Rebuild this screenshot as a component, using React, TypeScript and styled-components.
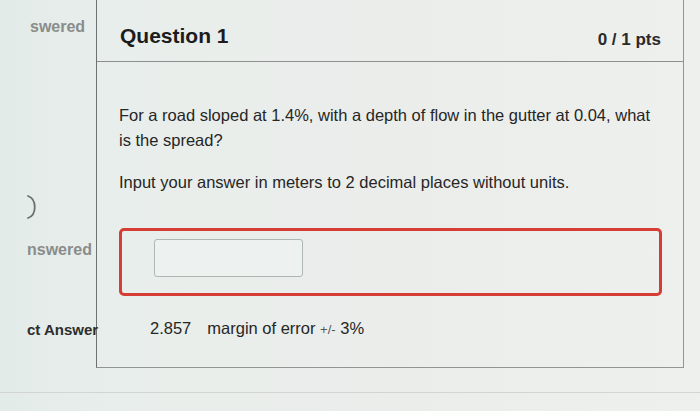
import React from "react";
import styled, { createGlobalStyle } from "styled-components";

const GlobalStyle = createGlobalStyle`
    html, body {
        margin: 0;
        padding: 0;
        background: #eaedeb;
    }
    body {
        font-family: "Liberation Sans", Arial, sans-serif;
        color: #2a2a2a;
    }
`;

const Page = styled.div`
    width: 700px;
    height: 411px;
    overflow: hidden;
    background: linear-gradient(90deg, #e3ebe8 0px, #e8eeeb 120px, #ebedeb 400px, #eef0ee 700px);
`;
const Row = styled.div`
    display: flex;
    height: 392px;
    border-bottom: 1px solid #d2d5d3;
`;
const Side = styled.div`
    width: 96px;
    flex-shrink: 0;
    padding-left: 27px;
    box-sizing: border-box;
    display: flex;
    flex-direction: column;
    position: relative;
    z-index: 1;
`;
const SideLabel = styled.div<{ $indent: number; $gap: number; $dark?: boolean }>`
    margin-left: ${p => p.$indent}px;
    margin-top: ${p => p.$gap}px;
    white-space: nowrap;
    font-weight: bold;
    font-size: ${p => (p.$dark ? 15 : 16)}px;
    line-height: 20px;
    color: ${p => (p.$dark ? "#2d2d2d" : "#8a8c8b")};
`;
const Arrow = styled.svg`
    display: block;
    margin-top: 158px;
    flex-shrink: 0;
`;

const Card = styled.div`
    width: 588px;
    height: 368px;
    box-sizing: border-box;
    border: 1px solid #939593;
    border-top: none;
    border-left-color: #6f7170;
    display: flex;
    flex-direction: column;
`;
const Header = styled.div`
    height: 62px;
    box-sizing: border-box;
    display: flex;
    justify-content: space-between;
    align-items: flex-end;
    padding: 0 22px 13px 23px;
    border-bottom: 1px solid #8e908f;
`;
const Title = styled.h2`
    margin: 0;
    font-size: 21px;
    line-height: 24px;
    font-weight: bold;
    color: #1c1c1c;
`;
const Points = styled.div`
    font-size: 17px;
    line-height: 24px;
    font-weight: bold;
    color: #2a2a2a;
    margin-bottom: -4px;
`;
const Body = styled.div`
    padding: 41px 0 0 22px;
    display: flex;
    flex-direction: column;
`;
const Text = styled.p<{ $gap?: number }>`
    margin: ${p => p.$gap ?? 0}px 0 0;
    max-width: 546px;
    font-size: 16.5px;
    line-height: 25px;
    color: #262626;
`;
const AnswerBox = styled.div`
    margin-top: 33px;
    width: 543px;
    height: 68px;
    box-sizing: border-box;
    border: 3px solid #d63d35;
    border-radius: 5px;
    padding: 8px 0 0 32px;
`;
const Input = styled.div`
    width: 149px;
    height: 38px;
    box-sizing: border-box;
    border: 1px solid #aeb8b3;
    border-radius: 3px;
    background: #edf1ef;
`;
const CorrectRow = styled.div`
    display: flex;
    align-items: baseline;
    gap: 16px;
    margin-top: 20px;
    padding-left: 31px;
    font-size: 16.5px;
    line-height: 25px;
    color: #262626;
`;
const Small = styled.span`
    font-size: 13px;
    color: #555;
`;

export default function App() {
    return (
        <Page>
            <GlobalStyle />
            <Row>
                <Side>
                    <SideLabel $indent={3} $gap={17}>swered</SideLabel>
                    <Arrow width="14" height="24" viewBox="0 0 14 24">
                        <path d="M1 1 C 10 4, 10 20, 1 23" fill="none" stroke="#6d6f6e" strokeWidth="1.8" strokeLinecap="round" />
                    </Arrow>
                    <SideLabel $indent={0} $gap={21}>nswered</SideLabel>
                    <SideLabel $indent={0} $gap={60} $dark>ct Answer</SideLabel>
                </Side>
                <Card>
                    <Header>
                        <Title>Question 1</Title>
                        <Points>0 / 1 pts</Points>
                    </Header>
                    <Body>
                        <Text>
                            For a road sloped at 1.4%, with a depth of flow in the gutter at 0.04, what is the spread?
                        </Text>
                        <Text $gap={17}>Input your answer in meters to 2 decimal places without units.</Text>
                        <AnswerBox>
                            <Input />
                        </AnswerBox>
                        <CorrectRow>
                            <span>2.857</span>
                            <span>
                                margin of error <Small>+/-</Small> 3%
                            </span>
                        </CorrectRow>
                    </Body>
                </Card>
            </Row>
        </Page>
    );
}
